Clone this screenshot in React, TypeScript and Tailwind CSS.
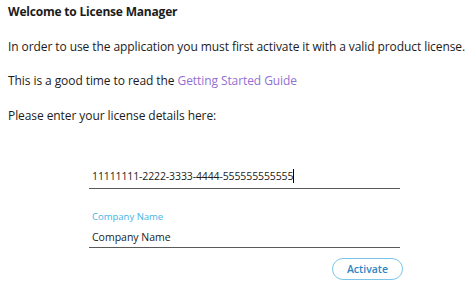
export default function App() {
  return (
    <div
      className="w-[474px] h-[287px] bg-white text-[12px] text-[#1b1b1b] overflow-hidden"
      style={{ fontFamily: '"Open Sans", "Noto Sans", sans-serif' }}
    >
      <div className="pl-[8px]">
        <h1 className="pt-[2px] leading-[20px] font-bold tracking-[-0.2px]">Welcome to License Manager</h1>
        <p className="mt-[15px] leading-[20px] tracking-[-0.08px]">
          In order to use the application you must first activate it with a valid product license.
        </p>
        <p className="mt-[14px] leading-[20px] tracking-[-0.08px]">
          This is a good time to read the{' '}
          <a className="text-[#9270d2] cursor-pointer">Getting Started Guide</a>
        </p>
        <p className="mt-[15px] leading-[20px] tracking-[-0.08px]">Please enter your license details here:</p>
      </div>

      <div className="ml-[89px] w-[311px]">
        <div className="mt-[39px] h-[24px] border-b border-[#5a5a5a] pl-[3px] pt-[1px] leading-[20px] text-[10.5px] tracking-[-0.12px]">
          11111111-2222-3333-4444-555555555555
          <span className="inline-block w-px h-[14px] bg-black align-[-3px]" />
        </div>

        <div className="mt-[21px] pl-[3px] leading-[14px] text-[9.5px] text-[#45b4e4]">Company Name</div>
        <div className="mt-[3px] h-[21px] border-b border-[#5a5a5a] pl-[3px] leading-[20px] text-[10.5px]">
          Company Name
        </div>

        <div className="flex justify-end -mr-[3px]">
          <button className="mt-[10px] w-[71px] h-[22px] rounded-full border border-[#7cc5e8] text-[10.5px] font-semibold text-[#2f86c4] leading-none">
            Activate
          </button>
        </div>
      </div>
    </div>
  )
}
